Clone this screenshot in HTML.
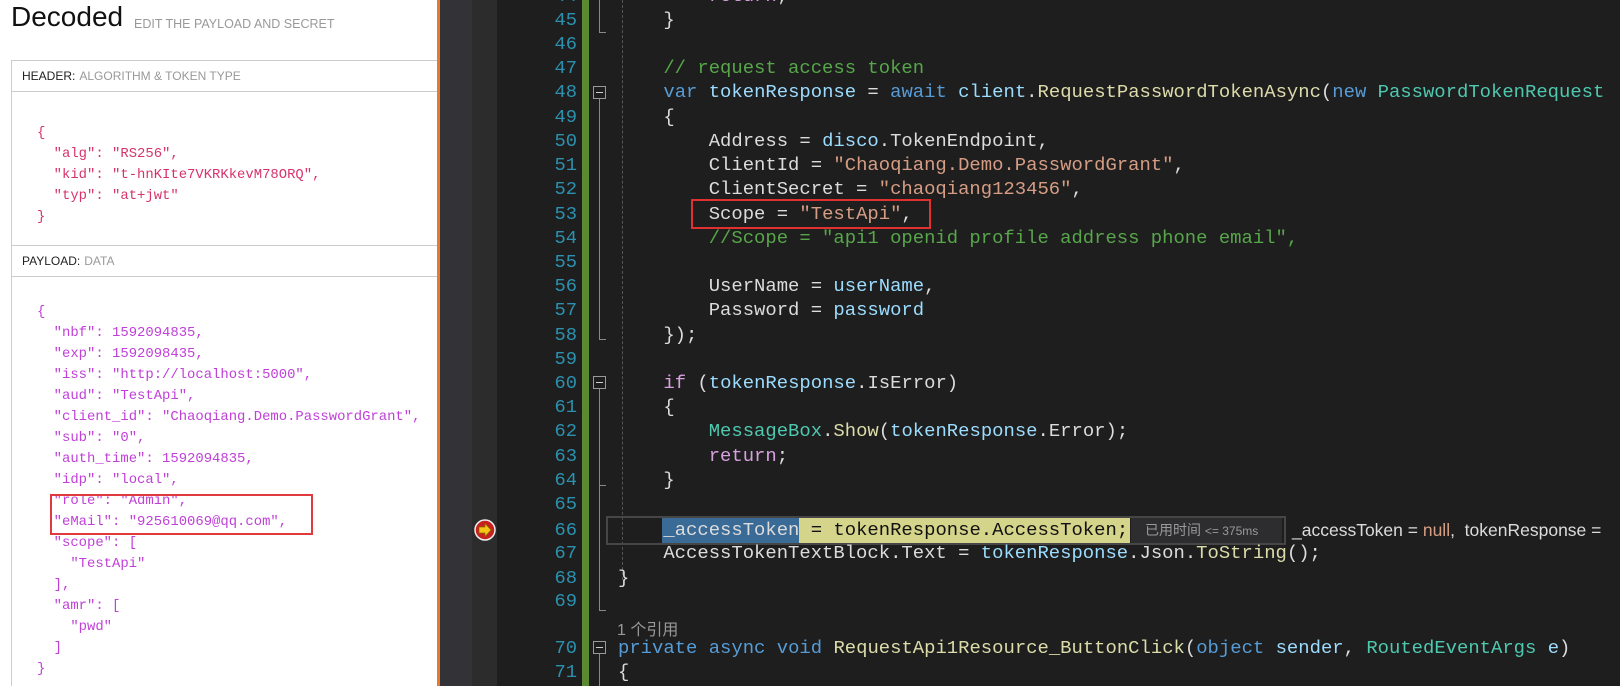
<!DOCTYPE html>
<html><head><meta charset="utf-8"><style>
*{margin:0;padding:0;box-sizing:border-box}
html,body{width:1620px;height:686px;overflow:hidden}
body{position:relative;background:#1e1e1e;font-family:"Liberation Sans","Noto Sans CJK SC",sans-serif}
#left{position:absolute;left:0;top:0;width:438px;height:686px;background:#fff;overflow:hidden}
#orange{position:absolute;left:437px;top:0;width:3px;height:686px;background:#e8782c}
.h1{position:absolute;left:11px;top:1px;font-size:28px;color:#111}
.sub{position:absolute;left:134px;top:17px;font-size:12.5px;color:#999}
.card{position:absolute;left:11px;border:1px solid #ccc;border-right:none;width:440px}
.lab{position:absolute;left:22px;font-size:12px;color:#222}
.lab span{color:#999;margin-left:4px}
.hl{position:absolute;left:11px;width:430px;height:1px;background:#ccc}
.js{position:absolute;left:37px;font-family:"Liberation Mono",monospace;font-size:13.9px;white-space:pre}
.js div{height:21px;line-height:21px}
.red{position:absolute;border:2px solid #e0393e}
.g1{position:absolute;left:440px;top:0;width:32px;height:686px;background:#333337}
.g2{position:absolute;left:472px;top:0;width:25px;height:686px;background:#2c2c2c}
.green{position:absolute;left:582px;top:0;width:7px;height:686px;background:#5b8a33}
.ln{position:absolute;left:497px;width:80px;text-align:right;font-family:"Liberation Mono",monospace;font-size:18.8px;color:#2b91af;height:24px;line-height:24px}
.cl{position:absolute;left:618px;font-family:"Liberation Mono",monospace;font-size:18.9px;color:#dcdcdc;white-space:pre;height:24px;line-height:24px}
.k{color:#569cd6}.t{color:#4ec9b0}.m{color:#dcdcaa}.v{color:#9cdcfe}.s{color:#d69d85}.c{color:#57a64a}.p{color:#d8a0df}
.fold{position:absolute;left:593px;width:13px;height:13px;border:1px solid #999;background:#1e1e1e}
.fold:after{content:"";position:absolute;left:2px;top:5px;width:7px;height:1px;background:#ccc}
.vl{position:absolute;left:599px;width:1px;background:#888}
.tk{position:absolute;left:599px;width:7px;height:1px;background:#888}
.dash{position:absolute;left:622px;top:0;height:580px;border-left:1px dashed #555}
</style></head><body>
<div id="left">
<div class="h1">Decoded</div>
<div class="sub">EDIT THE PAYLOAD AND SECRET</div>
<div class="card" style="top:60px;height:700px"></div>
<div class="lab" style="top:69px">HEADER:<span>ALGORITHM &amp; TOKEN TYPE</span></div>
<div class="hl" style="top:91px"></div>
<div class="js" style="top:123px;color:#d6336c"><div>{</div><div>  "alg": "RS256",</div><div>  "kid": "t-hnKIte7VKRKkevM78ORQ",</div><div>  "typ": "at+jwt"</div><div>}</div></div>
<div class="hl" style="top:245px"></div>
<div class="lab" style="top:254px">PAYLOAD:<span>DATA</span></div>
<div class="hl" style="top:276px"></div>
<div class="js" style="top:302px;color:#c040d8"><div>{</div><div>  "nbf": 1592094835,</div><div>  "exp": 1592098435,</div><div>  "iss": "http://localhost:5000",</div><div>  "aud": "TestApi",</div><div>  "client_id": "Chaoqiang.Demo.PasswordGrant",</div><div>  "sub": "0",</div><div>  "auth_time": 1592094835,</div><div>  "idp": "local",</div><div>  "role": "Admin",</div><div>  "eMail": "925610069@qq.com",</div><div>  "scope": [</div><div>    "TestApi"</div><div>  ],</div><div>  "amr": [</div><div>    "pwd"</div><div>  ]</div><div>}</div></div>
<div class="red" style="left:50px;top:494px;width:263px;height:41px"></div>
</div>
<div id="orange"></div>
<div class="g1"></div><div class="g2"></div>
<div class="green"></div>
<div class="dash"></div>
<div class="vl" style="top:0;height:33px"></div><div class="tk" style="top:32px"></div>
<div class="vl" style="top:99px;height:241px"></div><div class="tk" style="top:339px"></div>
<div class="vl" style="top:389px;height:97px"></div><div class="tk" style="top:485px"></div>
<div class="vl" style="top:486px;height:125px"></div><div class="tk" style="top:610px"></div>
<div class="vl" style="top:654px;height:32px"></div>
<div class="fold" style="top:86px"></div>
<div class="fold" style="top:376px"></div>
<div class="fold" style="top:641px"></div>

<div class="ln" style="top:-16px">44</div><div class="cl" style="top:-16px">        <span class="p">return</span>;</div>
<div class="ln" style="top:8px">45</div><div class="cl" style="top:8px">    }</div>
<div class="ln" style="top:32px">46</div>
<div class="ln" style="top:56px">47</div><div class="cl c" style="top:56px">    // request access token</div>
<div class="ln" style="top:80px">48</div><div class="cl" style="top:80px">    <span class="k">var</span> <span class="v">tokenResponse</span> = <span class="k">await</span> <span class="v">client</span>.<span class="m">RequestPasswordTokenAsync</span>(<span class="k">new</span> <span class="t">PasswordTokenRequest</span></div>
<div class="ln" style="top:105px">49</div><div class="cl" style="top:105px">    {</div>
<div class="ln" style="top:129px">50</div><div class="cl" style="top:129px">        Address = <span class="v">disco</span>.TokenEndpoint,</div>
<div class="ln" style="top:153px">51</div><div class="cl" style="top:153px">        ClientId = <span class="s">"Chaoqiang.Demo.PasswordGrant"</span>,</div>
<div class="ln" style="top:177px">52</div><div class="cl" style="top:177px">        ClientSecret = <span class="s">"chaoqiang123456"</span>,</div>
<div class="ln" style="top:202px">53</div><div class="cl" style="top:202px">        Scope = <span class="s">"TestApi"</span>,</div>
<div class="ln" style="top:226px">54</div><div class="cl c" style="top:226px">        //Scope = "api1 openid profile address phone email",</div>
<div class="ln" style="top:250px">55</div>
<div class="ln" style="top:274px">56</div><div class="cl" style="top:274px">        UserName = <span class="v">userName</span>,</div>
<div class="ln" style="top:298px">57</div><div class="cl" style="top:298px">        Password = <span class="v">password</span></div>
<div class="ln" style="top:323px">58</div><div class="cl" style="top:323px">    });</div>
<div class="ln" style="top:347px">59</div>
<div class="ln" style="top:371px">60</div><div class="cl" style="top:371px">    <span class="p">if</span> (<span class="v">tokenResponse</span>.IsError)</div>
<div class="ln" style="top:395px">61</div><div class="cl" style="top:395px">    {</div>
<div class="ln" style="top:419px">62</div><div class="cl" style="top:419px">        <span class="t">MessageBox</span>.<span class="m">Show</span>(<span class="v">tokenResponse</span>.Error);</div>
<div class="ln" style="top:444px">63</div><div class="cl" style="top:444px">        <span class="p">return</span>;</div>
<div class="ln" style="top:468px">64</div><div class="cl" style="top:468px">    }</div>
<div class="ln" style="top:492px">65</div>
<div style="position:absolute;left:606px;top:516px;width:680px;height:29px;border:2px solid #464646"></div>
<div style="position:absolute;left:662px;top:518px;width:137px;height:25px;background:#3a6a96"></div>
<div style="position:absolute;left:799px;top:518px;width:331px;height:25px;background:#d4d48a"></div>
<div class="ln" style="top:518px">66</div><div class="cl" style="top:518px">    <span style="color:#dcdcdc">_accessToken</span><span style="color:#111"> = tokenResponse.AccessToken;</span></div>
<div style="position:absolute;left:1131px;top:518px;width:151px;height:25px;background:#2d2d30;color:#999;font-size:14px;line-height:25px;padding-left:14px;white-space:nowrap">已用时间 <span style="font-size:12px">&lt;= 375ms</span></div>
<div style="position:absolute;left:1292px;top:518px;font-size:17.5px;line-height:25px;color:#dcdcdc;white-space:pre">_accessToken = <span style="color:#d69d85">null</span>,  tokenResponse = </div>
<div class="ln" style="top:541px">67</div><div class="cl" style="top:541px">    AccessTokenTextBlock.Text = <span class="v">tokenResponse</span>.Json.<span class="m">ToString</span>();</div>
<div class="ln" style="top:566px">68</div><div class="cl" style="top:566px">}</div>
<div class="ln" style="top:589px">69</div>
<div style="position:absolute;left:617px;top:616px;font-size:16px;color:#999">1 个引用</div>
<div class="ln" style="top:636px">70</div><div class="cl" style="top:636px"><span class="k">private</span> <span class="k">async</span> <span class="k">void</span> <span class="m">RequestApi1Resource_ButtonClick</span>(<span class="k">object</span> <span class="v">sender</span>, <span class="t">RoutedEventArgs</span> <span class="v">e</span>)</div>
<div class="ln" style="top:660px">71</div><div class="cl" style="top:660px">{</div>
<div class="red" style="left:691px;top:199px;width:240px;height:30px;border-color:#e03030"></div>
<svg style="position:absolute;left:474px;top:519px" width="22" height="22" viewBox="0 0 22 22"><circle cx="11" cy="11" r="10" fill="#c8201e" stroke="#eee" stroke-width="1.5"/><path d="M5 8h6V4.5l6 6.5-6 6.5V14H5z" fill="#f5c518" stroke="#8a6a00" stroke-width=".7"/></svg>
</body></html>
